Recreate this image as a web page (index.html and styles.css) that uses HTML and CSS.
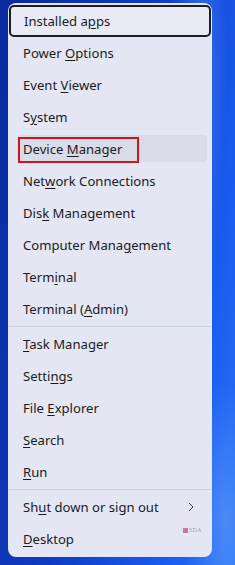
FILE: index.html
```html
<!DOCTYPE html>
<html>
<head>
<meta charset="utf-8">
<link rel="stylesheet" href="styles.css">
</head>
<body>
<div class="menu">
  <div class="item focused"><span class="label">Installed a<u>p</u>ps</span></div>
  <div class="item"><span class="label">Power <u>O</u>ptions</span></div>
  <div class="item"><span class="label">Event <u>V</u>iewer</span></div>
  <div class="item"><span class="label">S<u>y</u>stem</span></div>
  <div class="item hover"><span class="label">Device <u>M</u>anager</span><span class="redbox"></span></div>
  <div class="item"><span class="label">Net<u>w</u>ork Connections</span></div>
  <div class="item"><span class="label">Dis<u>k</u> Management</span></div>
  <div class="item"><span class="label">Computer Mana<u>g</u>ement</span></div>
  <div class="item"><span class="label">Term<u>i</u>nal</span></div>
  <div class="item"><span class="label">Terminal (<u>A</u>dmin)</span></div>
  <div class="sep"></div>
  <div class="item"><span class="label"><u>T</u>ask Manager</span></div>
  <div class="item"><span class="label">Setti<u>n</u>gs</span></div>
  <div class="item"><span class="label">File <u>E</u>xplorer</span></div>
  <div class="item"><span class="label"><u>S</u>earch</span></div>
  <div class="item"><span class="label"><u>R</u>un</span></div>
  <div class="sep"></div>
  <div class="item"><span class="label">Sh<u>u</u>t down or sign out</span>
    <svg class="chev" width="6" height="10" viewBox="0 0 6 10"><path d="M1 1 L5 5 L1 9" fill="none" stroke="#3a3a40" stroke-width="1"/></svg>
  </div>
  <div class="item"><span class="label"><u>D</u>esktop</span><span class="xda"><span class="xda-logo"></span>XDA</span></div>
</div>
</body>
</html>
```
FILE: styles.css
```css
html, body {
  margin: 0;
  padding: 0;
  height: 565px;
  overflow: hidden;
}
body {
  background:
    radial-gradient(ellipse 40px 300px at 200px 60px, rgba(120,170,255,0.35), transparent 70%),
    radial-gradient(ellipse 60px 200px at 225px 520px, rgba(130,180,255,0.4), transparent 70%),
    linear-gradient(100deg, #0a2a9c 0%, #0f3bc4 45%, #1a5cf0 80%, #2a72f6 100%);
  font-family: "Noto Sans", "Open Sans", sans-serif;
  font-size: 13.1px;
  color: #1b1b1f;
}
.menu {
  margin: 3px 0 0 8px;
  width: 204px;
  height: 554px;
  box-sizing: border-box;
  padding: 2px 0;
  background: #e4e7f3;
  border-radius: 8px;
  display: flex;
  flex-direction: column;
}
.item {
  position: relative;
  height: 32px;
  display: flex;
  align-items: center;
  padding-left: 15px;
  box-sizing: border-box;
  white-space: nowrap;
}
.label {
  position: relative;
  white-space: pre;
}
.item u {
  text-decoration-thickness: 1px;
  text-underline-offset: 2px;
}
.focused {
  margin: 0 1px;
  height: 32px;
  padding-left: 13px;
  border: 2px solid #1c1c22;
  border-radius: 5px;
  background: #e8ebf6;
}
.hover::before {
  content: "";
  position: absolute;
  left: 9px;
  right: 5px;
  top: 2px;
  bottom: 3px;
  background: #d9dce8;
  border-radius: 4px;
}
.redbox {
  position: absolute;
  left: 10px;
  top: 4px;
  width: 117px;
  height: 22px;
  border: 2px solid #d3141e;
}
.sep {
  height: 3px;
  display: flex;
  align-items: center;
}
.sep::after {
  content: "";
  flex: 1;
  height: 1px;
  background: #cfd3df;
}
.chev {
  position: absolute;
  left: 180px;
  top: 11px;
}
.xda {
  position: absolute;
  left: 175px;
  top: 3px;
  font-size: 6px;
  color: #b89ab4;
  letter-spacing: 0.3px;
  display: flex;
  align-items: center;
  gap: 1px;
}
.xda-logo {
  width: 5px;
  height: 5px;
  background: #c07aa8;
  display: inline-block;
}
```
